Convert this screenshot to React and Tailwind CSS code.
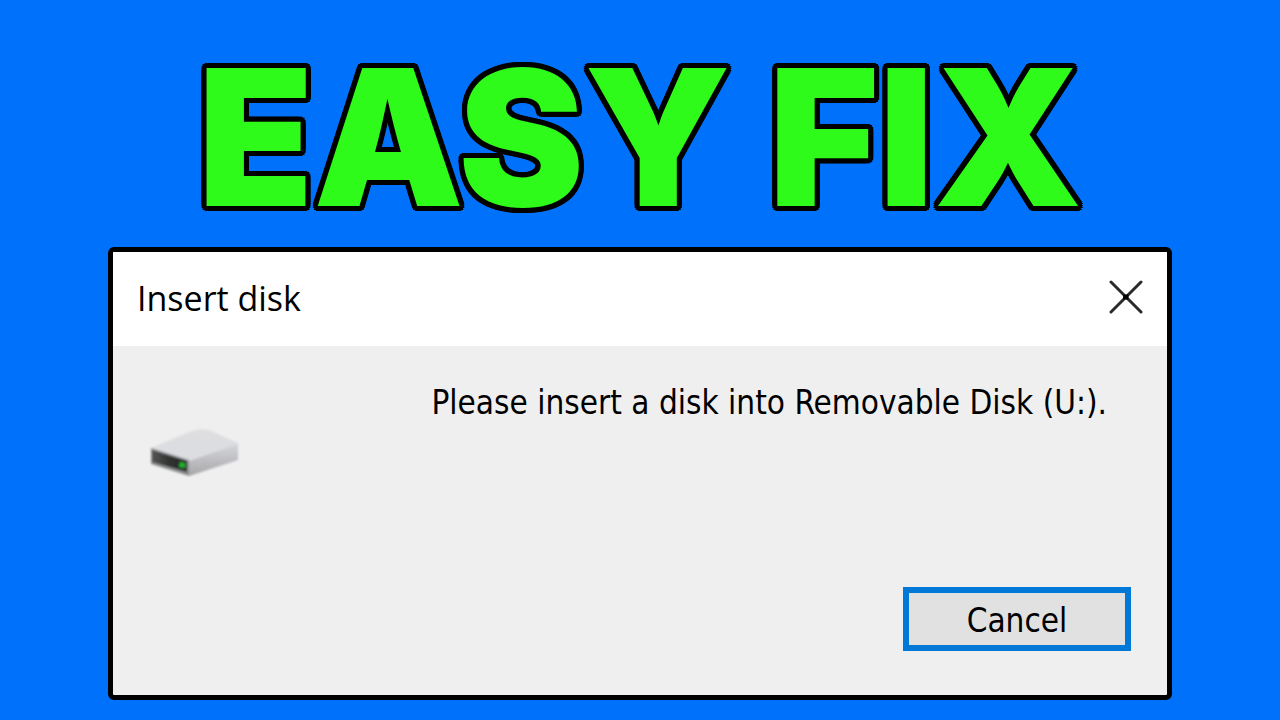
const TITLE_OUTLINE =
  '[text-shadow:5px_0_#000,-5px_0_#000,0_5px_#000,0_-5px_#000,4px_4px_#000,-4px_4px_#000,4px_-4px_#000,-4px_-4px_#000,5px_2px_#000,-5px_2px_#000,5px_-2px_#000,-5px_-2px_#000,2px_5px_#000,-2px_5px_#000,2px_-5px_#000,-2px_-5px_#000]';

function CloseIcon() {
  return (
    <svg viewBox="0 0 34 34" className="w-[34px] h-[34px]" fill="none" stroke="#2a2a2a" strokeWidth="3" strokeLinecap="round">
      <path d="M2 2 32 32M32 2 2 32" />
      <path d="M15 15h4v4h-4z" strokeWidth="1" stroke="#000" fill="#000" />
    </svg>
  );
}

function DriveIcon() {
  return (
    <svg viewBox="0 0 92 52" className="w-[92px] h-[52px] shrink-0" aria-hidden="true">
      <defs>
        <linearGradient id="top" x1="0" y1="0" x2="0" y2="1">
          <stop offset="0" stopColor="#dededf" />
          <stop offset="1" stopColor="#dadde3" />
        </linearGradient>
        <linearGradient id="side" x1="0" y1="0" x2="0" y2="1">
          <stop offset="0" stopColor="#d4d5da" />
          <stop offset="0.5" stopColor="#bfbfc3" />
          <stop offset="1" stopColor="#a6a6a8" />
        </linearGradient>
        <linearGradient id="front" x1="0" y1="0" x2="1" y2="0">
          <stop offset="0" stopColor="#555" />
          <stop offset="0.5" stopColor="#303230" />
          <stop offset="1" stopColor="#252a25" />
        </linearGradient>
        <filter id="soft" x="-5%" y="-5%" width="110%" height="110%">
          <feGaussianBlur stdDeviation="1" />
        </filter>
      </defs>
      <g filter="url(#soft)">
        <path d="M2 22 40 6Q50 2 60 4L89 17V34L40 50 2 38Z" fill="url(#top)" />
        <path d="M40 35 89 18V34L40 50Z" fill="url(#side)" />
        <path d="M2 22 40 34V50L2 38Z" fill="#8b8c8e" />
        <path d="M3 24 38 35V46L3 36Z" fill="url(#front)" />
        <path d="M31 36l5 1v5l-6-1z" fill="#1fb52c" />
      </g>
    </svg>
  );
}

export default function App() {
  return (
    <main className="min-h-screen bg-[#0071fb] px-27 pt-7 pb-5 flex flex-col">
      <h1
        className={`text-center whitespace-nowrap text-[189px] leading-[219px] font-black text-[#2efb19] font-['Inter','DejaVu_Sans',sans-serif] ${TITLE_OUTLINE}`}
      >
        EASY FIX
      </h1>

      <section
        role="dialog"
        aria-labelledby="dialog-title"
        className="flex-1 flex flex-col border-5 border-black rounded-md bg-[#efefef] text-black"
      >
        <header className="flex items-start justify-between h-[94px] px-6 pt-7 bg-white">
          <h2 id="dialog-title" className="text-[34px] leading-9 font-['Open_Sans','Noto_Sans',sans-serif]">
            Insert disk
          </h2>
          <button type="button" aria-label="Close">
            <CloseIcon />
          </button>
        </header>

        <div className="flex-1 flex flex-col justify-between px-9 pt-9 pb-11 font-['DejaVu_Sans_Condensed','DejaVu_Sans',sans-serif] text-[33px] leading-[42px]">
          <div className="flex items-start justify-between">
            <div className="pt-11">
              <DriveIcon />
            </div>
            <p className="pr-6">Please insert a disk into Removable Disk (U:).</p>
          </div>
          <button type="button" className="self-end w-[228px] h-16 pt-1 border-6 border-[#0078d7] bg-[#e1e1e1]">
            Cancel
          </button>
        </div>
      </section>
    </main>
  );
}
